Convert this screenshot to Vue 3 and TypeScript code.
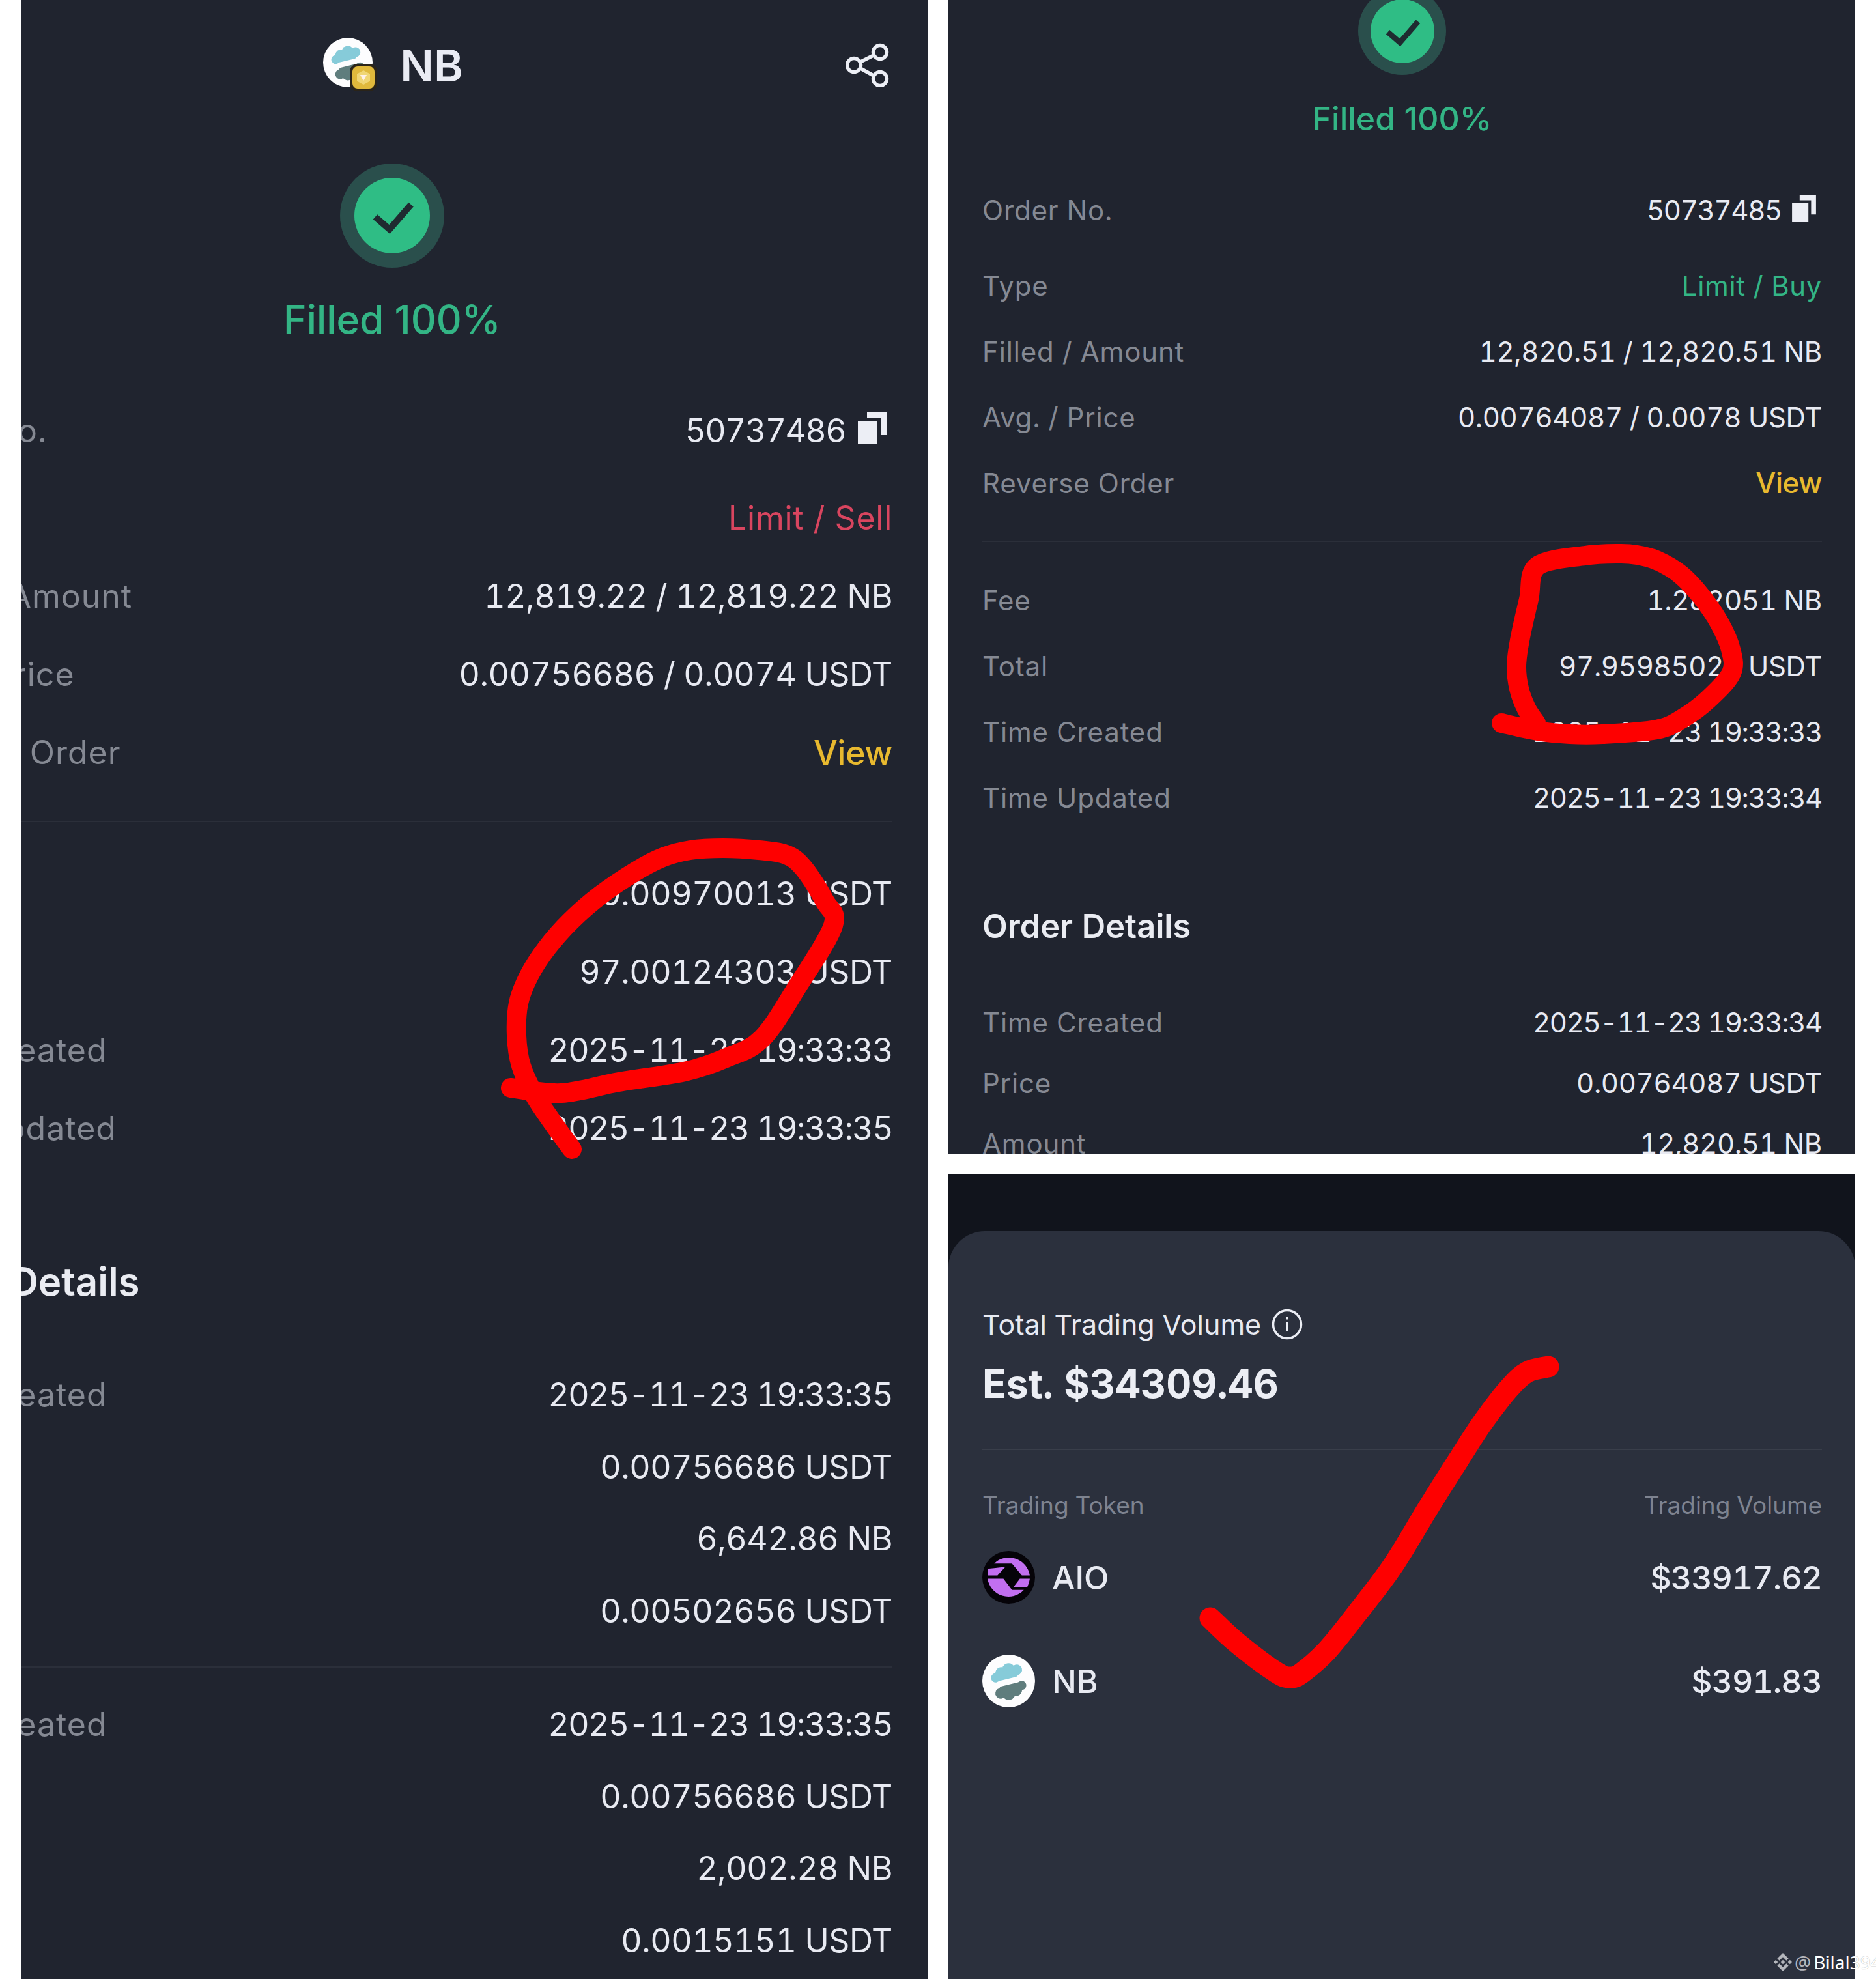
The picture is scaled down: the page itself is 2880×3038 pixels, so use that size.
<template>
  <div class="page">
    <svg width="0" height="0" class="defs">
      <defs>
        <symbol id="cloud" viewBox="0 0 80 80">
          <g transform="rotate(-14 37 28)">
            <circle cx="19" cy="31" r="7" />
            <circle cx="29" cy="26" r="9" />
            <circle cx="41" cy="24" r="10" />
            <circle cx="53" cy="27" r="8" />
            <rect x="19" y="24" width="34" height="13" rx="4" />
          </g>
        </symbol>
        <symbol id="nb-logo" viewBox="0 0 80 80">
          <circle cx="40" cy="40" r="40" fill="#fdfdfe" />
          <use href="#cloud" width="80" height="80" fill="#86cbd9" />
          <use href="#cloud" width="80" height="80" fill="#5f7d7d" transform="rotate(180 40 41)" />
        </symbol>
        <symbol id="copy-icon" viewBox="0 0 44 49">
          <rect x="0" y="14" width="30" height="35" fill="#eceef5" />
          <path d="M14 0h30v35h-9V9H14z" fill="#eceef5" />
        </symbol>
        <symbol id="check" viewBox="0 0 70 70">
          <path d="M9 37l22 19L64 18" fill="none" stroke="#1f2a30" stroke-width="10" />
        </symbol>
      </defs>
    </svg>

    <section class="panel panel--left">
      <div class="screen screen--left">
        <header class="topbar">
          <div class="coin">
            <span class="coin-logo">
              <svg width="76" height="76"><use href="#nb-logo" /></svg>
              <span class="chain-badge">
                <svg width="34" height="34" viewBox="0 0 34 34">
                  <path d="M17 6l10 5.500v11L17 28 7 22.500v-11z" fill="#f0d675" />
                  <path d="M12 13h10l-5 9z" fill="#fff1e8" />
                </svg>
              </span>
            </span>
            <span class="coin-name">NB</span>
          </div>
          <svg class="share" width="68" height="68" viewBox="0 0 68 68" fill="none" stroke="#eceef5" stroke-width="5.500">
            <circle cx="53" cy="14" r="10.500" />
            <circle cx="13" cy="34" r="10.500" />
            <circle cx="53" cy="55" r="10.500" />
            <path d="M23 29l20-10M23 39l20 11" />
          </svg>
        </header>

        <div class="status">
          <div class="status-ring">
            <div class="status-dot">
              <svg width="70" height="70"><use href="#check" /></svg>
            </div>
          </div>
          <div class="status-text">Filled 100%</div>
        </div>

        <div class="rows">
          <div v-for="row in sellSummary" :key="row.label" class="row">
            <span class="label">{{ row.label }}</span>
            <span class="value" :class="row.tone">
              {{ row.value }}
              <svg v-if="row.copy" class="copy" width="44" height="49"><use href="#copy-icon" /></svg>
            </span>
          </div>
        </div>
        <div class="divider divider--summary"></div>
        <div class="rows rows--fees">
          <div v-for="row in sellFees" :key="row.label" class="row">
            <span class="label">{{ row.label }}</span>
            <span class="value" :class="row.tone">{{ row.value }}</span>
          </div>
        </div>
        <h2 class="heading">Order Details</h2>
        <div class="rows rows--details">
          <div v-for="row in sellFillA" :key="row.label" class="row">
            <span class="label">{{ row.label }}</span>
            <span class="value" :class="row.tone">{{ row.value }}</span>
          </div>
        </div>
        <div class="divider divider--fills"></div>
        <div class="rows rows--details rows--last">
          <div v-for="row in sellFillB" :key="row.label" class="row">
            <span class="label">{{ row.label }}</span>
            <span class="value" :class="row.tone">{{ row.value }}</span>
          </div>
        </div>
      </div>
    </section>

    <div class="col">
      <section class="panel panel--right">
        <div class="screen screen--right">
          <div class="status">
            <div class="status-ring">
              <div class="status-dot">
                <svg width="59" height="59"><use href="#check" /></svg>
              </div>
            </div>
            <div class="status-text">Filled 100%</div>
          </div>

          <div class="rows">
            <div v-for="row in buySummary" :key="row.label" class="row">
              <span class="label">{{ row.label }}</span>
              <span class="value" :class="row.tone">
                {{ row.value }}
                <svg v-if="row.copy" class="copy" width="37" height="41"><use href="#copy-icon" /></svg>
              </span>
            </div>
          </div>
          <div class="divider divider--summary"></div>
          <div class="rows rows--fees">
            <div v-for="row in buyFees" :key="row.label" class="row">
              <span class="label">{{ row.label }}</span>
              <span class="value" :class="row.tone">{{ row.value }}</span>
            </div>
          </div>
          <h2 class="heading">Order Details</h2>
          <div class="rows rows--details">
            <div v-for="row in buyFill" :key="row.label" class="row">
              <span class="label">{{ row.label }}</span>
              <span class="value" :class="row.tone">{{ row.value }}</span>
            </div>
          </div>
        </div>
      </section>

      <section class="panel panel--volume">
        <div class="sheet">
          <div class="sheet-title">
            Total Trading Volume
            <svg width="48" height="48" viewBox="0 0 48 48" fill="none" stroke="#eceef5" stroke-width="3.500">
              <circle cx="24" cy="24" r="21.500" />
              <path d="M24 21v14" stroke-width="4" />
              <path d="M24 12.500v4" stroke-width="4" />
            </svg>
          </div>
          <div class="sheet-total">Est. $34309.46</div>
          <div class="sheet-divider"></div>
          <div class="token-head">
            <span>Trading Token</span>
            <span>Trading Volume</span>
          </div>
          <div class="token-row">
            <div class="token">
              <svg width="81" height="81" viewBox="0 0 80 80">
                <circle cx="40" cy="40" r="40" fill="#050308" />
                <g fill="#c26ff0">
                  <path d="M18 19h27l15 18h12A32 32 0 0 0 18 19z" />
                  <path d="M8 37V27l27-3-12 13z" />
                  <path d="M8 42h24l13 17h18A32 32 0 0 1 8 42z" />
                  <path d="M72 42H57L47 55h21a32 32 0 0 0 4-13z" />
                </g>
              </svg>
              AIO
            </div>
            <span class="token-value">$33917.62</span>
          </div>
          <div class="token-row">
            <div class="token">
              <svg width="81" height="81"><use href="#nb-logo" /></svg>
              NB
            </div>
            <span class="token-value">$391.83</span>
          </div>
        </div>
      </section>
    </div>

    <!-- marker strokes drawn on top of the screenshots -->
    <svg class="marks" width="2880" height="3038" fill="none" stroke="#fe0000" stroke-linecap="round" stroke-linejoin="round">
      <path v-for="(m, i) in marks" :key="i" :d="smooth(m.points)" :stroke-width="m.width" />
    </svg>

    <div class="watermark">
      <svg width="28" height="28" viewBox="0 0 126.610 126.610" fill="#b4b6bc">
        <path
          d="M38.730 53.200l24.590-24.580 24.600 24.600 14.300-14.310L63.320 0 24.430 38.900zM0 63.310l14.300-14.310 14.310 14.310-14.310 14.300zM38.730 73.410l24.590 24.590 24.600-24.600 14.310 14.290-38.900 38.910L24.430 87.710zM98 63.310l14.300-14.310 14.310 14.300-14.310 14.300zM77.830 63.300L63.320 48.780 52.590 59.510l-1.240 1.230-2.540 2.540 14.510 14.500 14.510-14.470z"
        />
      </svg>
      <span class="wm-at">@</span>
      <span class="wm-name">Bilal394</span>
    </div>
  </div>
</template>

<script setup lang="ts">
interface Row {
  label: string
  value: string
  tone?: string
  copy?: boolean
}

type Point = [number, number]

const sellSummary: Row[] = [
  { label: 'Order No.', value: '50737486', copy: true, tone: 'tight' },
  { label: 'Type', value: 'Limit / Sell', tone: 'sell' },
  { label: 'Filled / Amount', value: '12,819.22 / 12,819.22 NB' },
  { label: 'Avg. / Price', value: '0.00756686 / 0.0074 USDT' },
  { label: 'Reverse Order', value: 'View', tone: 'link' },
]
const sellFees: Row[] = [
  { label: 'Fee', value: '0.00970013 USDT' },
  { label: 'Total', value: '97.00124303 USDT' },
  { label: 'Time Created', value: '2025-11-23 19:33:33', tone: 'tight' },
  { label: 'Time Updated', value: '2025-11-23 19:33:35', tone: 'tight' },
]
const sellFillA: Row[] = [
  { label: 'Time Created', value: '2025-11-23 19:33:35', tone: 'tight' },
  { label: 'Price', value: '0.00756686 USDT' },
  { label: 'Amount', value: '6,642.86 NB' },
  { label: 'Fee', value: '0.00502656 USDT' },
]
const sellFillB: Row[] = [
  { label: 'Time Created', value: '2025-11-23 19:33:35', tone: 'tight' },
  { label: 'Price', value: '0.00756686 USDT' },
  { label: 'Amount', value: '2,002.28 NB' },
  { label: 'Fee', value: '0.0015151 USDT' },
]

const buySummary: Row[] = [
  { label: 'Order No.', value: '50737485', copy: true, tone: 'tight' },
  { label: 'Type', value: 'Limit / Buy', tone: 'buy' },
  { label: 'Filled / Amount', value: '12,820.51 / 12,820.51 NB' },
  { label: 'Avg. / Price', value: '0.00764087 / 0.0078 USDT' },
  { label: 'Reverse Order', value: 'View', tone: 'link' },
]
const buyFees: Row[] = [
  { label: 'Fee', value: '1.282051 NB' },
  { label: 'Total', value: '97.95985021 USDT' },
  { label: 'Time Created', value: '2025-11-23 19:33:33', tone: 'tight' },
  { label: 'Time Updated', value: '2025-11-23 19:33:34', tone: 'tight' },
]
const buyFill: Row[] = [
  { label: 'Time Created', value: '2025-11-23 19:33:34', tone: 'tight' },
  { label: 'Price', value: '0.00764087 USDT' },
  { label: 'Amount', value: '12,820.51 NB' },
]

const marks: { width: number; points: Point[] }[] = [
  {
    width: 30,
    points: [
      [784, 1670], [862, 1678], [950, 1661], [1051, 1645], [1115, 1624], [1170, 1594], [1225, 1513],
      [1279, 1421], [1266, 1383], [1234, 1333], [1207, 1312], [1165, 1305], [1110, 1302], [1060, 1305],
      [1018, 1316], [977, 1337], [922, 1374], [876, 1414], [839, 1456], [812, 1498], [796, 1540],
      [793, 1590], [800, 1636], [821, 1682], [849, 1724], [878, 1764],
    ],
  },
  {
    width: 30,
    points: [
      [2305, 1110], [2360, 1122], [2410, 1127], [2460, 1127], [2543, 1120], [2583, 1103], [2623, 1073],
      [2658, 1033], [2657, 997], [2640, 957], [2613, 917], [2580, 882], [2543, 860], [2513, 852],
      [2487, 850], [2433, 853], [2360, 869], [2347, 920], [2333, 983], [2328, 1023], [2332, 1057],
      [2343, 1087], [2358, 1110],
    ],
  },
  {
    width: 33,
    points: [
      [2377, 2098], [2345, 2106], [2317, 2131], [2276, 2184], [2239, 2241], [2193, 2314], [2138, 2404],
      [2083, 2477], [2037, 2534], [2000, 2567], [1982, 2575], [1959, 2567], [1899, 2522], [1858, 2484],
    ],
  },
]

// catmull-rom through the hand-drawn points
function smooth(pts: Point[]): string {
  let d = `M${pts[0][0]} ${pts[0][1]}`
  for (let i = 0; i < pts.length - 1; i++) {
    const p0 = pts[Math.max(i - 1, 0)]
    const p1 = pts[i]
    const p2 = pts[i + 1]
    const p3 = pts[Math.min(i + 2, pts.length - 1)]
    const c1x = p1[0] + (p2[0] - p0[0]) / 6
    const c1y = p1[1] + (p2[1] - p0[1]) / 6
    const c2x = p2[0] - (p3[0] - p1[0]) / 6
    const c2y = p2[1] - (p3[1] - p1[1]) / 6
    d += `C${c1x} ${c1y} ${c2x} ${c2y} ${p2[0]} ${p2[1]}`
  }
  return d
}
</script>

<style>
html,
body {
  margin: 0;
  background: #fff;
}
</style>

<style scoped>
.page {
  position: relative;
  width: 2880px;
  height: 3038px;
  box-sizing: border-box;
  padding-left: 33px;
  display: flex;
  gap: 31px;
  background: #fff;
  overflow: hidden;
  font-family: Inter, 'Liberation Sans', sans-serif;
  font-variant-numeric: tabular-nums;
  color: #e8eaf2;
}

.defs {
  position: absolute;
}

.panel {
  width: 1392px;
  overflow: hidden;
  background: #20242f;
}

.panel--left {
  height: 3038px;
}

.col {
  display: flex;
  flex-direction: column;
  gap: 30px;
}

.panel--right {
  height: 1772px;
}

.panel--volume {
  height: 1236px;
  padding-top: 88px;
  box-sizing: border-box;
  background: #11141c;
}

/* left screenshot is zoomed in and cropped on its left side */
.screen--left {
  width: 1536px;
  margin-left: -199px;
  font-size: 50px;
}

.screen--right {
  margin-top: -20px;
  padding: 0 51px 0 52px;
  font-size: 42px;
}

.topbar {
  position: relative;
  height: 200px;
  display: flex;
  justify-content: center;
  padding-top: 58px;
  box-sizing: border-box;
}

.coin {
  display: flex;
  align-items: flex-start;
  gap: 42px;
  margin-left: 3px;
}

.coin-logo {
  position: relative;
  display: block;
  width: 76px;
  height: 76px;
}

.coin-logo > svg {
  display: block;
}

.chain-badge {
  position: absolute;
  left: 41px;
  top: 40px;
  width: 42px;
  height: 42px;
  box-sizing: border-box;
  display: flex;
  align-items: center;
  justify-content: center;
  background: #e0b93c;
  border: 4px solid #2a2419;
  border-radius: 12px;
}

.coin-name {
  margin-top: 4px;
  font-size: 68px;
  font-weight: 600;
  line-height: 76px;
  color: #e9ebf3;
}

.share {
  position: absolute;
  right: 4px;
  top: 66px;
}

.status {
  display: flex;
  flex-direction: column;
  align-items: center;
}

.status-ring {
  display: flex;
  align-items: center;
  justify-content: center;
  border-radius: 50%;
  background: #2a4f4c;
}

.status-dot {
  display: flex;
  align-items: center;
  justify-content: center;
  border-radius: 50%;
  background: #2fbd85;
}

.status-text {
  font-weight: 500;
  font-variant-numeric: normal;
  color: #33b585;
}

.screen--left .status {
  margin-top: 51px;
}

.screen--left .status-ring {
  width: 160px;
  height: 160px;
}

.screen--left .status-dot {
  width: 116px;
  height: 116px;
}

.screen--left .status-text {
  margin-top: 39px;
  font-size: 60.500px;
  line-height: 80px;
}

.screen--right .status-ring {
  width: 135px;
  height: 135px;
}

.screen--right .status-dot {
  width: 98px;
  height: 98px;
}

.screen--right .status-text {
  margin-top: 33px;
  font-size: 50px;
  line-height: 68px;
}

.row {
  display: flex;
  align-items: center;
  justify-content: space-between;
  white-space: nowrap;
}

.label {
  color: #858993;
  letter-spacing: 0.02em;
}

.value {
  display: flex;
  align-items: center;
  letter-spacing: -0.008em;
  color: #e8eaf2;
}

.tight {
  letter-spacing: -0.032em;
}

.copy {
  flex: none;
}

.sell {
  color: #d9455f;
  letter-spacing: 0.015em;
}

.buy {
  color: #33b585;
  letter-spacing: 0.015em;
}

.link {
  color: #e8b92f;
  font-size: 1.04em;
  font-weight: 500;
}

.divider {
  height: 2px;
  background: #2b2f3a;
}

.heading {
  margin: 0;
  font-weight: 600;
  color: #eaecf2;
}

/* left column vertical rhythm */
.screen--left .rows {
  margin-top: 71px;
}

.screen--left .row {
  height: 120px;
}

.screen--left .row:first-child {
  margin-bottom: 14px;
}

.screen--left .copy {
  margin: -7px 9px 0 19px;
}

.screen--left .divider--summary {
  margin-top: 45px;
}

.screen--left .rows--fees {
  margin-top: 50px;
}

.screen--left .rows--fees .row:first-child {
  margin-bottom: 0;
}

.screen--left .heading {
  margin-top: 135px;
  font-size: 60px;
  line-height: 80px;
}

.screen--left .rows--details {
  margin-top: 79px;
}

.screen--left .rows--details .row {
  height: 110.500px;
  margin-bottom: 0;
}

.screen--left .divider--fills {
  margin-top: 30px;
}

.screen--left .rows--last {
  margin-top: 32px;
}

/* right column vertical rhythm */
.screen--right .rows {
  margin-top: 56px;
}

.screen--right .row {
  height: 101px;
}

.screen--right .row:first-child {
  margin-bottom: 15px;
}

.screen--right .copy {
  margin: -4px 9px 0 16px;
}

.screen--right .divider--summary {
  margin-top: 38px;
}

.screen--right .rows--fees {
  margin-top: 39px;
}

.screen--right .rows--fees .row:first-child {
  margin-bottom: 0;
}

.screen--right .heading {
  margin-top: 112px;
  font-size: 50.500px;
  line-height: 70px;
}

.screen--right .rows--details {
  margin-top: 66px;
}

.screen--right .rows--details .row {
  height: 93px;
  margin-bottom: 0;
}

.sheet {
  height: 100%;
  box-sizing: border-box;
  padding: 112px 51px 0 52px;
  background: #2b303d;
  border-radius: 56px 56px 0 0;
}

.sheet-title {
  display: flex;
  align-items: center;
  gap: 16px;
  height: 62px;
  font-size: 43px;
  color: #e8eaf2;
}

.sheet-total {
  margin-top: 21px;
  font-size: 60.500px;
  font-weight: 700;
  line-height: 78px;
  color: #eceef4;
}

.sheet-divider {
  margin-top: 61px;
  height: 2px;
  background: #393e4a;
}

.token-head {
  display: flex;
  justify-content: space-between;
  margin-top: 60px;
  font-size: 37px;
  line-height: 50px;
  color: #7e8390;
}

.token-row {
  display: flex;
  align-items: center;
  justify-content: space-between;
  height: 159px;
  font-size: 50px;
  font-weight: 500;
}

.token-head + .token-row {
  margin-top: 6px;
}

.token {
  display: flex;
  align-items: center;
  gap: 26px;
}

.token svg {
  flex: none;
}

.token-value {
  letter-spacing: -0.02em;
}

.marks {
  position: absolute;
  left: 0;
  top: 0;
  pointer-events: none;
}

.watermark {
  position: absolute;
  left: 2723px;
  top: 2996px;
  display: flex;
  align-items: center;
  gap: 4px;
  font-family: 'Noto Sans', sans-serif;
  font-size: 28px;
  line-height: 32px;
  white-space: nowrap;
}

.wm-at {
  color: #b4b6bc;
}

.wm-name {
  color: #fff;
  text-shadow: 0 0 1px rgba(0, 0, 0, 0.45);
}
</style>
